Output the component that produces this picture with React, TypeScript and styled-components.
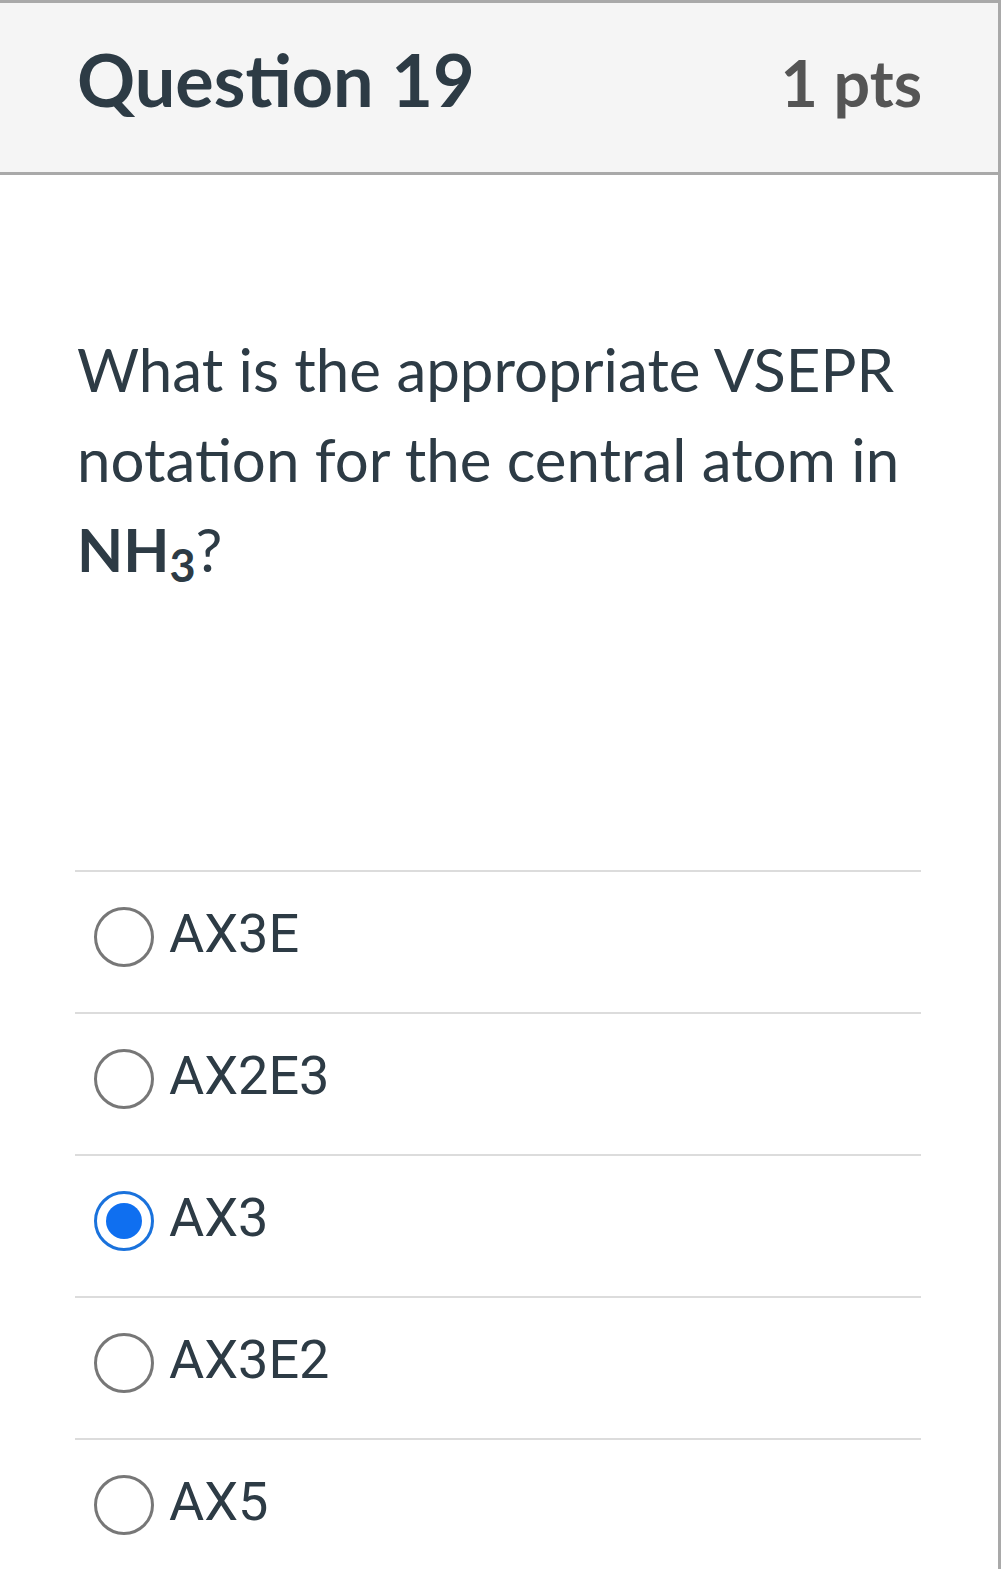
import React from "react";
import styled, { createGlobalStyle } from "styled-components";

const GlobalStyle = createGlobalStyle`
  html, body {
    margin: 0;
    padding: 0;
    background: #ffffff;
  }
  body {
    font-family: Lato, "Liberation Sans", sans-serif;
    color: #2d3b45;
  }
`;

const Panel = styled.div`
  width: 998px;
  min-height: 100vh;
  border-top: 3px solid #a9a9a9;
  border-right: 3px solid #a9a9a9;
  background: #ffffff;
`;

const Header = styled.div`
  display: flex;
  align-items: baseline;
  justify-content: space-between;
  background: #f5f5f5;
  border-bottom: 3px solid #a9a9a9;
  padding: 32px 76px 45px 77px;
  height: 92px;
`;

const Title = styled.h2`
  margin: 0;
  font-family: Lato, sans-serif;
  font-weight: 700;
  font-size: 72px;
  line-height: 89px;
  color: #2d3b45;
`;

const Points = styled.span`
  font-family: Lato, sans-serif;
  font-weight: 700;
  font-size: 64.5px;
  color: #555555;
`;

const Body = styled.div`
  padding: 149px 77px 0 75px;
`;

const QuestionText = styled.div`
  font-family: Lato, sans-serif;
  font-size: 60px;
  line-height: 90px;
  color: #2d3b45;
  padding-left: 2px;
  margin-bottom: 276px;

  strong {
    font-weight: 700;
  }

  sub {
    font-size: 45px;
    line-height: 0;
    vertical-align: -10px;
  }
`;

const Answers = styled.div`
  display: flex;
  flex-direction: column;
`;

const AnswerRow = styled.label`
  display: flex;
  align-items: center;
  height: 128px;
  padding-bottom: 12px;
  border-top: 2px solid #dcdcdc;
`;

const Radio = styled.span<{ $checked: boolean }>`
  box-sizing: border-box;
  width: 60px;
  height: 60px;
  margin-left: 19px;
  margin-right: 15px;
  margin-top: 2px;
  border-radius: 50%;
  border: 3px solid ${(p) => (p.$checked ? "#1a72dc" : "#777777")};
  display: flex;
  align-items: center;
  justify-content: center;
  flex-shrink: 0;

  &::after {
    content: "";
    display: ${(p) => (p.$checked ? "block" : "none")};
    width: 36px;
    height: 36px;
    border-radius: 50%;
    background: #0f6ff0;
  }
`;

const AnswerText = styled.span`
  font-family: Roboto, "Liberation Sans", sans-serif;
  font-size: 54px;
  color: #2d3b45;
  margin-top: -6px;
`;

const answers = ["AX3E", "AX2E3", "AX3", "AX3E2", "AX5"];
const selected = "AX3";

export default function App() {
  return (
    <>
      <GlobalStyle />
      <Panel>
        <Header>
          <Title>Question 19</Title>
          <Points>1 pts</Points>
        </Header>
        <Body>
          <QuestionText>
            What is the appropriate VSEPR notation for the central atom in{" "}
            <strong>
              NH<sub>3</sub>
            </strong>
            ?
          </QuestionText>
          <Answers>
            {answers.map((a) => (
              <AnswerRow key={a}>
                <Radio $checked={a === selected} />
                <AnswerText>{a}</AnswerText>
              </AnswerRow>
            ))}
          </Answers>
        </Body>
      </Panel>
    </>
  );
}
